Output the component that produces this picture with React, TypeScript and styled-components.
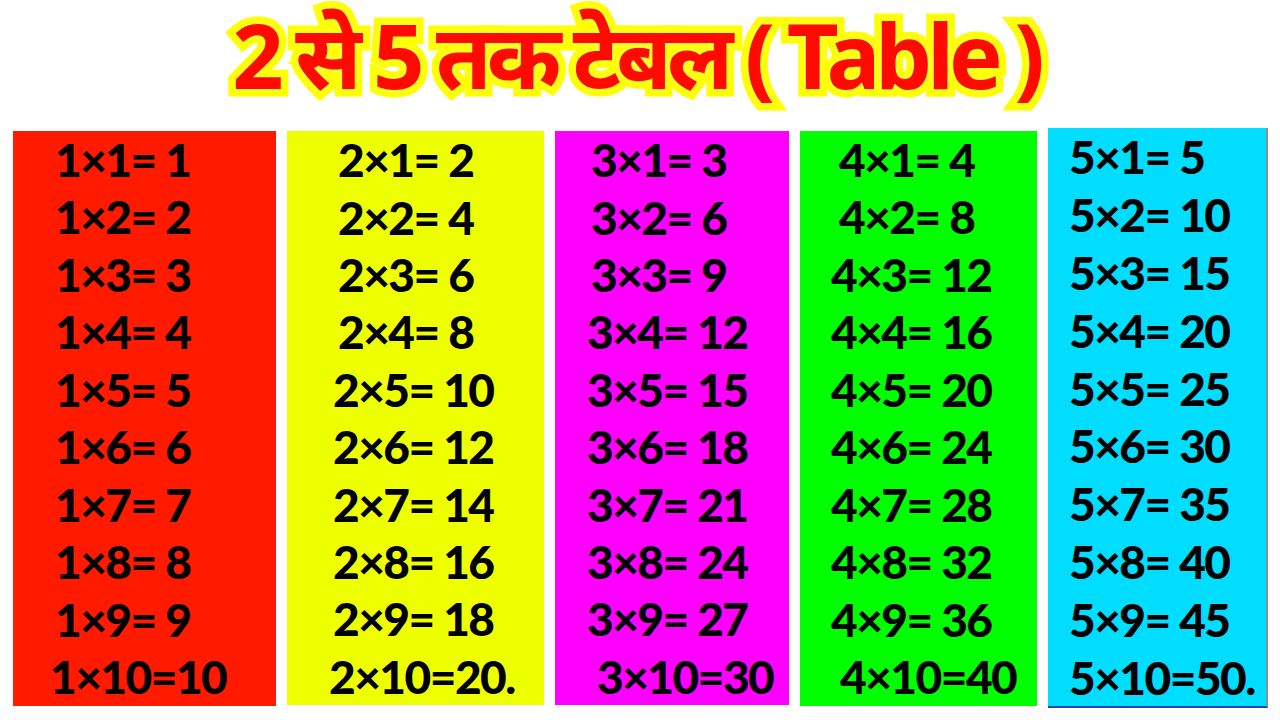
import React from "react";
import styled, { createGlobalStyle } from "styled-components";

const GlobalStyle = createGlobalStyle`
  html, body {
    margin: 0;
    padding: 0;
    background: #ffffff;
  }
  body {
    width: 1280px;
    height: 720px;
    overflow: hidden;
    font-family: "Lato", "Noto Sans", sans-serif;
  }
`;

interface TableSpec {
  n: number;
  bg: string;
  width: number;
  height: number;
  pad: number;
  shifts: number[];
}

const tables: TableSpec[] = [
  { n: 1, bg: "#ff1a00", width: 263, height: 575, pad: 42, shifts: [0, 0, 0, 0, 0, 0, 0, 0, 0, -5] },
  { n: 2, bg: "#eeff00", width: 257, height: 574, pad: 51, shifts: [0, 0, 0, 0, -5, -5, -5, -5, -5, -9] },
  { n: 3, bg: "#ff00ff", width: 234, height: 574, pad: 36, shifts: [0, 0, 0, -4, -4, -4, -4, -4, -4, 6] },
  { n: 4, bg: "#00ff00", width: 237, height: 575, pad: 39, shifts: [0, 0, -8, -8, -8, -8, -8, -8, -8, 1] },
  { n: 5, bg: "#00ddff", width: 220, height: 580, pad: 21, shifts: [0, 0, 0, 0, 0, 0, 0, 0, 0, 0] },
];

const suffix: Record<number, string> = { 2: ".", 5: "." };

export default function App() {
  return (
    <Page>
      <GlobalStyle />
      <Header>
        <Title>2 से 5 तक टेबल ( Table )</Title>
      </Header>
      <Columns>
        {tables.map((t) => (
          <Column key={t.n} $bg={t.bg} $width={t.width} $height={t.height} $pad={t.pad} $framed={t.n === 5}>
            {t.shifts.map((s, i) => {
              const k = i + 1;
              const text =
                k === 10
                  ? `${t.n}×10=${t.n * 10}${suffix[t.n] ?? ""}`
                  : `${t.n}×${k}= ${t.n * k}`;
              return (
                <Row key={k} $shift={s}>
                  {text}
                </Row>
              );
            })}
          </Column>
        ))}
      </Columns>
    </Page>
  );
}

const Page = styled.div`
  width: 1280px;
  height: 720px;
  display: flex;
  flex-direction: column;
`;

const Header = styled.header`
  height: 126px;
  box-sizing: border-box;
  padding: 0 8px 18px 0;
  display: flex;
  align-items: center;
  justify-content: center;
`;

const Title = styled.h1`
  margin: 0;
  padding: 0 14px;
  font-family: "Noto Sans", "Noto Sans Devanagari", "Lato", sans-serif;
  font-weight: 700;
  font-size: 90px;
  line-height: 1.2;
  letter-spacing: -5px;
  word-spacing: -2px;
  color: #ff0a00;
  -webkit-text-stroke: 15px #ffff00;
  paint-order: stroke fill;
  text-shadow: 0 0 6px rgba(255, 250, 120, 0.8);
  white-space: nowrap;
`;

const Columns = styled.div`
  display: flex;
  align-items: center;
  gap: 11px;
  padding-left: 13px;
  height: 584px;
`;

const Column = styled.div<{ $bg: string; $width: number; $height: number; $pad: number; $framed?: boolean }>`
  box-sizing: border-box;
  width: ${(p) => p.$width}px;
  height: ${(p) => p.$height}px;
  background: ${(p) => p.$bg};
  padding-left: ${(p) => p.$pad}px;
  display: flex;
  flex-direction: column;
  border-right: ${(p) => (p.$framed ? "2px solid #8a8f98" : "none")};
  border-bottom: ${(p) => (p.$framed ? "2px solid #2a3fb0" : "none")};
`;

const Row = styled.div<{ $shift: number }>`
  height: 57.8px;
  display: flex;
  align-items: center;
  margin-left: ${(p) => p.$shift}px;
  font-family: "Lato", sans-serif;
  font-weight: 900;
  font-size: 46px;
  letter-spacing: -1.5px;
  color: #000000;
  white-space: nowrap;
`;
